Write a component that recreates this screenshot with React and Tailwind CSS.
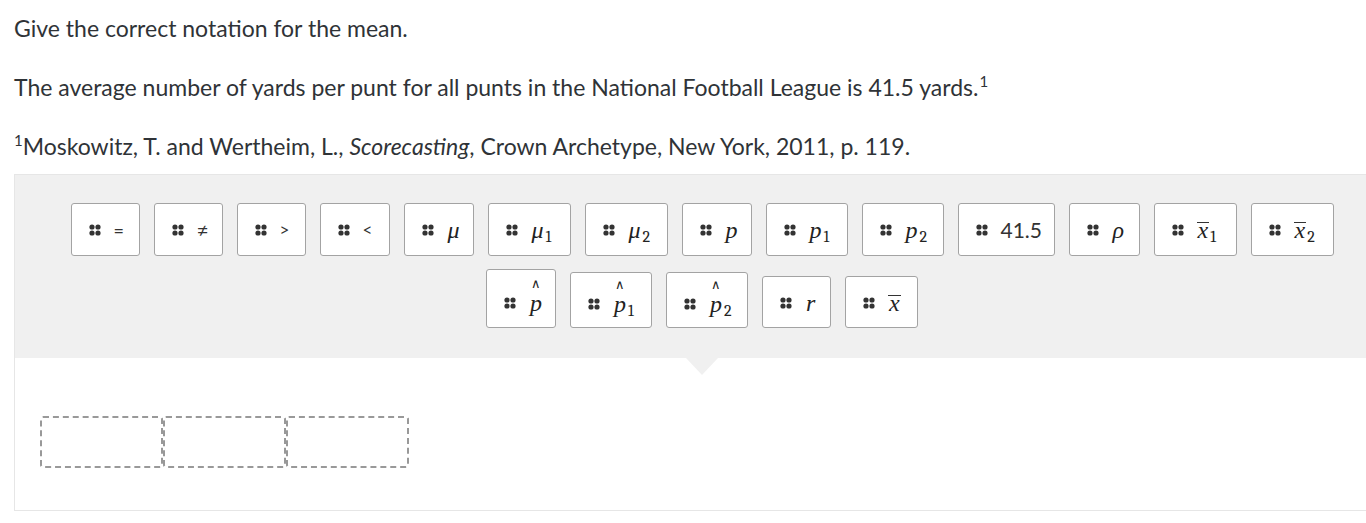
import React from 'react';

const Dots = () => (
  <svg width="12" height="12" viewBox="0 0 12 12" className="shrink-0">
    <circle cx="3" cy="3" r="2.6" fill="#333" />
    <circle cx="9" cy="3" r="2.6" fill="#333" />
    <circle cx="3" cy="9" r="2.6" fill="#333" />
    <circle cx="9" cy="9" r="2.6" fill="#333" />
  </svg>
);

const Sub = ({ children }) => (
  <span className="not-italic font-serif text-[16px] relative top-[4px] ml-[1px]">{children}</span>
);

const MathVar = ({ v, sub, hat, bar }) => (
  <span className="font-['Liberation_Serif','Times_New_Roman',serif] text-[24px] leading-none inline-flex items-baseline text-[#222]">
    <span className="italic relative px-[1px]">
      {hat && (
        <span className="absolute not-italic text-[13px] left-1/2 -translate-x-1/2 -top-[13px] h-[12px] leading-[12px]">∧</span>
      )}
      {bar && <span className="absolute left-0 right-0 top-[4px] h-px bg-[#333]" />}
      {v}
    </span>
    {sub && <Sub>{sub}</Sub>}
  </span>
);

const Tile = ({ w, h = 53, pt = 0, children }) => (
  <div
    className="bg-white border border-[#a3a3a3] rounded-[3px] flex items-center pl-[17px] gap-[13px] box-border"
    style={{ width: w, height: h, paddingTop: pt }}
  >
    <Dots />
    {children}
  </div>
);

const Sym = ({ children, size = 'text-[18px]' }) => (
  <span className={`font-['Lato',sans-serif] ${size} text-[#333] leading-none`}>{children}</span>
);

export default function App() {
  return (
    <div className="w-full overflow-hidden bg-white font-['Lato','Liberation_Sans',sans-serif] text-[#2f3337]">
      <p className="pt-[14px] px-[14px] text-[23px] leading-[28px]">Give the correct notation for the mean.</p>
      <p className="mt-[31px] px-[14px] text-[23px] leading-[28px]">
        The average number of yards per punt for all punts in the National Football League is 41.5 yards.
        <span className="text-[15px] leading-none relative -top-[9px] ml-[1px]">1</span>
      </p>
      <p className="mt-[31px] px-[14px] text-[23px] leading-[28px]">
        <span className="text-[15px] leading-none relative -top-[9px]">1</span>Moskowitz, T. and Wertheim, L., <i>Scorecasting</i>, Crown Archetype, New York, 2011, p. 119.
      </p>

      <div className="mt-[14px] ml-[14px] w-[1376px] border border-[#e6e6e6]">
        <div className="relative bg-[#f0f0f0] pt-[28px] pb-[30px]">
          <div className="flex justify-center gap-[14px]">
            <Tile w={69}><Sym>=</Sym></Tile>
            <Tile w={69}><Sym size="text-[21px]">≠</Sym></Tile>
            <Tile w={69}><Sym size="text-[17px]">&gt;</Sym></Tile>
            <Tile w={70}><Sym size="text-[17px]">&lt;</Sym></Tile>
            <Tile w={70}><MathVar v="μ" /></Tile>
            <Tile w={83}><MathVar v="μ" sub="1" /></Tile>
            <Tile w={83}><MathVar v="μ" sub="2" /></Tile>
            <Tile w={70}><MathVar v="p" /></Tile>
            <Tile w={82}><MathVar v="p" sub="1" /></Tile>
            <Tile w={82}><MathVar v="p" sub="2" /></Tile>
            <Tile w={97}><Sym size="text-[21px]">41.5</Sym></Tile>
            <Tile w={71}><MathVar v="ρ" /></Tile>
            <Tile w={83}><MathVar v="x" sub="1" bar /></Tile>
            <Tile w={83}><MathVar v="x" sub="2" bar /></Tile>
          </div>
          <div className="mt-[13px] flex justify-center items-end gap-[14px]">
            <Tile w={70} h={59} pt={9}><MathVar v="p" hat /></Tile>
            <Tile w={82} h={56} pt={7}><MathVar v="p" sub="1" hat /></Tile>
            <Tile w={82} h={56} pt={7}><MathVar v="p" sub="2" hat /></Tile>
            <Tile w={69} h={52} pt={2}><MathVar v="r" /></Tile>
            <Tile w={73} h={52} pt={2}><MathVar v="x" bar /></Tile>
          </div>
          <div className="absolute left-1/2 -translate-x-1/2 top-full w-0 h-0 border-l-[16px] border-r-[16px] border-t-[17px] border-l-transparent border-r-transparent border-t-[#f0f0f0]" />
        </div>
        <div className="h-[152px] pt-[58px] pl-[25px] flex items-start">
          <div className="w-[123px] h-[52px] border-2 border-dashed border-[#999] rounded-[3px]" />
          <div className="w-[123px] h-[52px] border-2 border-dashed border-[#999] rounded-[3px]" />
          <div className="w-[123px] h-[52px] border-2 border-dashed border-[#999] rounded-[3px]" />
        </div>
      </div>
    </div>
  );
}
